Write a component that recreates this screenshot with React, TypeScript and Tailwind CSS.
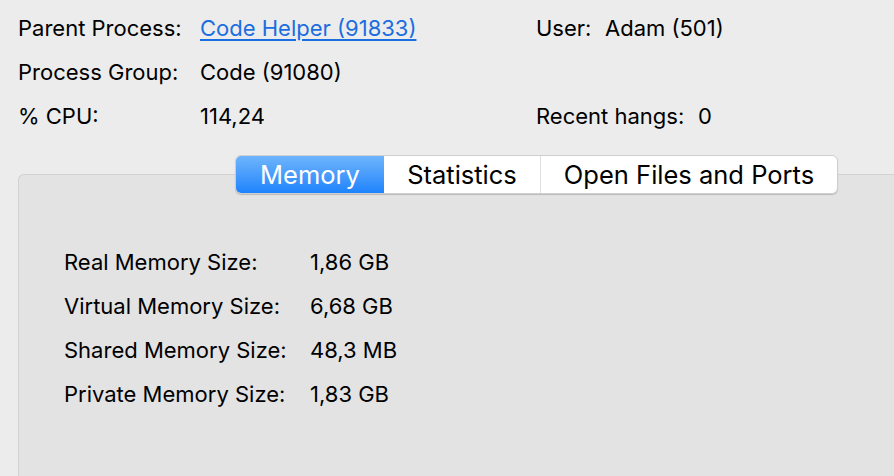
import React from "react";

const font = { fontFamily: 'Inter, "Liberation Sans", sans-serif' };

function MemRow({ label, value }: { label: string; value: string }) {
  return (
    <>
      <div className="h-[44px] flex items-center">{label}</div>
      <div className="h-[44px] flex items-center">{value}</div>
    </>
  );
}

export default function App() {
  return (
    <div
      className="w-[894px] h-[476px] bg-[#ececec] overflow-hidden text-black text-[22px] antialiased"
      style={font}
    >
      <div className="pl-[18px] pt-[6px] grid grid-cols-[182px_336px_1fr]">
        <div className="h-[44px] flex items-center">Parent Process:</div>
        <div className="h-[44px] flex items-center">
          <span className="text-[#1b6ee0] underline underline-offset-[3px] decoration-[1.5px]">
            Code Helper (91833)
          </span>
        </div>
        <div className="h-[44px] flex items-center">
          <span className="w-[69px]">User:</span>
          <span>Adam (501)</span>
        </div>

        <div className="h-[44px] flex items-center">Process Group:</div>
        <div className="h-[44px] flex items-center">Code (91080)</div>
        <div className="h-[44px]" />

        <div className="h-[44px] flex items-center">% CPU:</div>
        <div className="h-[44px] flex items-center">114,24</div>
        <div className="h-[44px] flex items-center">
          <span className="w-[162px]">Recent hangs:</span>
          <span>0</span>
        </div>
      </div>

      <div className="mt-[17px] ml-[235px] relative z-10 flex w-[603px] h-[39px] rounded-[6px] bg-white border border-[#cfcfcf] shadow-[0_1px_1px_rgba(0,0,0,0.18)] text-[25.5px] overflow-hidden">
        <div className="w-[148px] pt-[1px] flex items-center justify-center text-white bg-gradient-to-b from-[#6db4fb] to-[#1a83fd]">
          Memory
        </div>
        <div className="w-[157px] pt-[1px] flex items-center justify-center border-r border-[#dedede]">
          Statistics
        </div>
        <div className="flex-1 pt-[1px] flex items-center justify-center">
          Open Files and Ports
        </div>
      </div>

      <div className="-mt-[20px] ml-[18px] h-[400px] bg-[#e3e3e3] border-l border-t border-[#d2d2d2] rounded-tl-[6px] pt-[65px] pl-[45px]">
        <div className="grid grid-cols-[246px_1fr]">
          <MemRow label="Real Memory Size:" value="1,86 GB" />
          <MemRow label="Virtual Memory Size:" value="6,68 GB" />
          <MemRow label="Shared Memory Size:" value="48,3 MB" />
          <MemRow label="Private Memory Size:" value="1,83 GB" />
        </div>
      </div>
    </div>
  );
}
